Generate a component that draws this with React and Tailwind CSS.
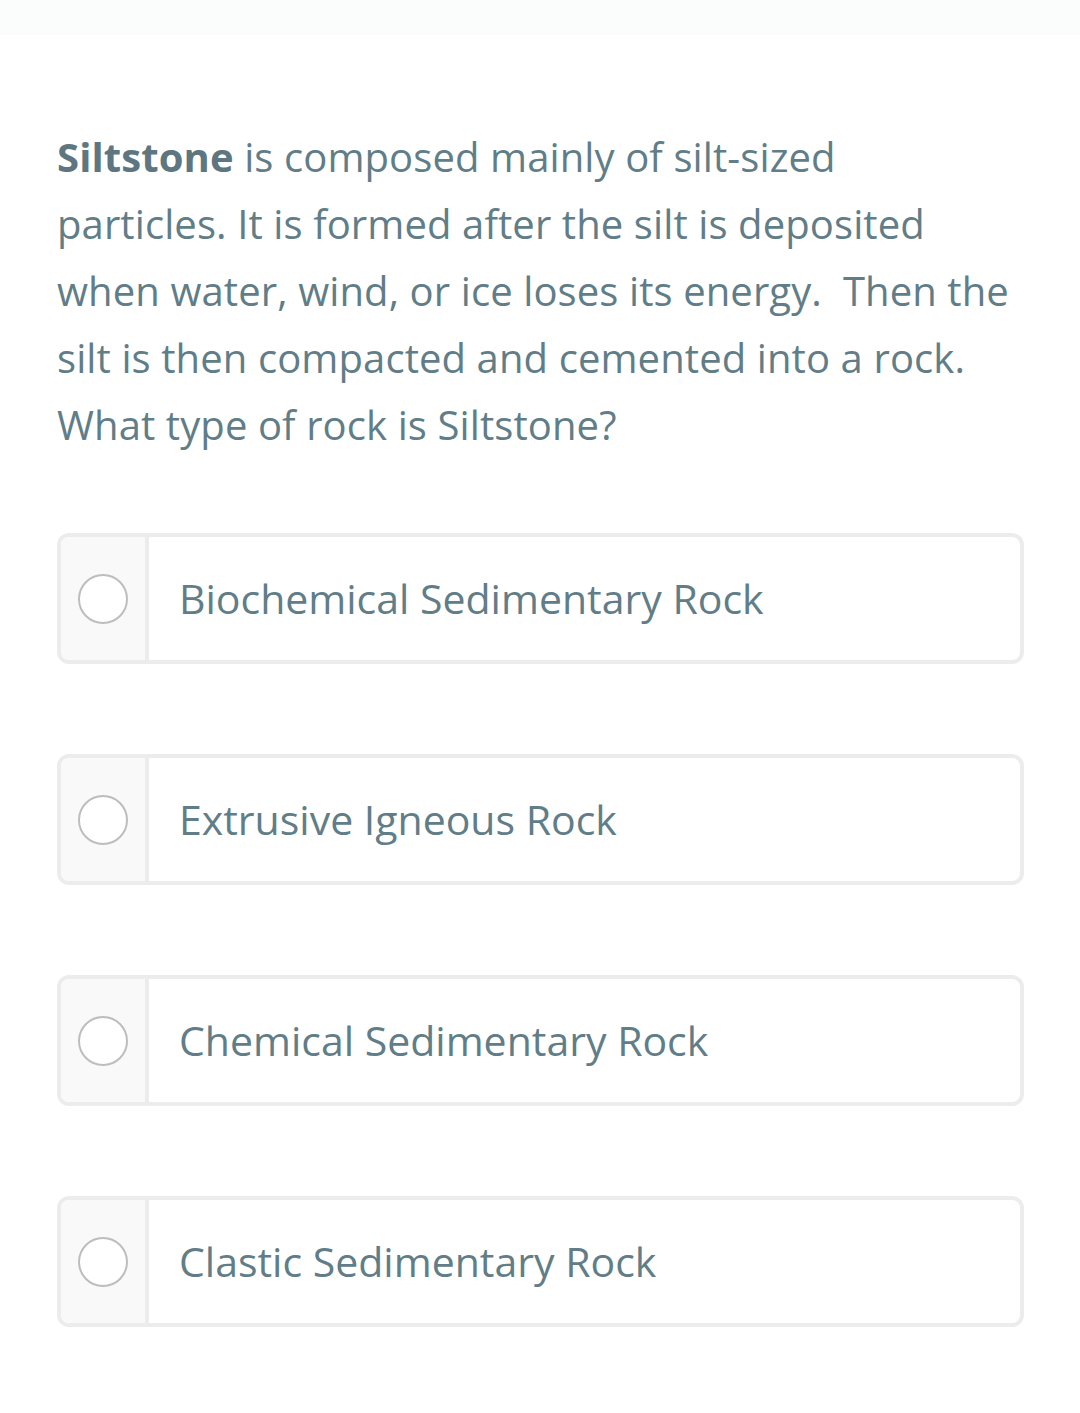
export default function App() {
  const options = [
    "Biochemical Sedimentary Rock",
    "Extrusive Igneous Rock",
    "Chemical Sedimentary Rock",
    "Clastic Sedimentary Rock",
  ];
  return (
    <div className="w-[1080px] h-[1413px] bg-white" style={{ fontFamily: '"Open Sans", sans-serif' }}>
      <div className="h-[35px] bg-[#fbfdfc]" />
      <div className="px-[57px] pt-[88px]">
        <p className="text-[40px] leading-[67px] text-[#617d87] whitespace-nowrap tracking-[0.1px]">
          <span className="font-bold text-[#5e7680]">Siltstone</span> is composed mainly of silt-sized
          <br />
          particles. It is formed after the silt is deposited
          <br />
          when water, wind, or ice loses its energy.&nbsp; Then the
          <br />
          silt is then compacted and cemented into a rock.
          <br />
          What type of rock is Siltstone?
        </p>
        <div className="mt-[75px] flex flex-col gap-[90px] w-[967px]">
          {options.map((o) => (
            <div key={o} className="flex h-[131px] rounded-[12px] border-[4px] border-[#ececec] overflow-hidden">
              <div className="w-[88px] bg-[#f9f9f9] border-r-[4px] border-[#ececec] flex items-center justify-center">
                <div className="w-[50px] h-[50px] rounded-full border-2 border-[#bdbdbd] bg-white" />
              </div>
              <div className="flex-1 flex items-center pl-[30px] text-[41px] text-[#617d87]">{o}</div>
            </div>
          ))}
        </div>
      </div>
    </div>
  );
}
